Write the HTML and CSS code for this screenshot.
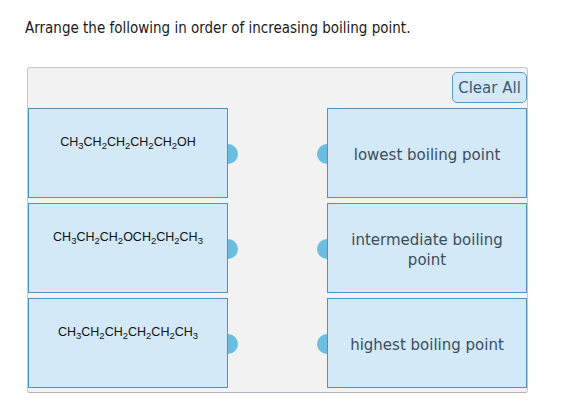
FILE: index.html
```html
<!DOCTYPE html>
<html lang="en">
<head>
    <meta charset="UTF-8">
    <title>Boiling point ranking</title>
    <link rel="stylesheet" href="styles.css">
</head>
<body>
    <p class="prompt">Arrange the following in order of increasing boiling point.</p>

    <div class="match-board">
        <div class="toolbar">
            <button class="clear-btn" type="button">Clear All</button>
        </div>

        <div class="match-grid">
            <div class="card source">
                <span class="formula">CH<sub>3</sub>CH<sub>2</sub>CH<sub>2</sub>CH<sub>2</sub>CH<sub>2</sub>OH</span>
            </div>
            <div class="card target">lowest boiling point</div>

            <div class="card source">
                <span class="formula">CH<sub>3</sub>CH<sub>2</sub>CH<sub>2</sub>OCH<sub>2</sub>CH<sub>2</sub>CH<sub>3</sub></span>
            </div>
            <div class="card target">intermediate boiling point</div>

            <div class="card source">
                <span class="formula">CH<sub>3</sub>CH<sub>2</sub>CH<sub>2</sub>CH<sub>2</sub>CH<sub>2</sub>CH<sub>3</sub></span>
            </div>
            <div class="card target">highest boiling point</div>
        </div>
    </div>
</body>
</html>
```

FILE: styles.css
```css
body {
    margin: 0;
    padding: 0 0 0 25px;
    background: #ffffff;
    font-family: "DejaVu Sans", Verdana, sans-serif;
}

.prompt {
    margin: 0;
    padding-top: 19px;
    font-family: "DejaVu Sans Condensed", "DejaVu Sans", Verdana, sans-serif;
    font-size: 15px;
    line-height: 18px;
    color: #1a1a1a;
}

/* grey panel holding both columns */
.match-board {
    width: 499px;
    margin: 30px 0 0 2px;
    padding: 0 0 4px;
    background: #f2f2f2;
    border: 1px solid #c3cbd6;
    border-bottom-color: #aab3bf;
    border-radius: 3px;
}

.toolbar {
    display: flex;
    justify-content: flex-end;
    padding: 4px 0 5px;
}

.clear-btn {
    width: 75px;
    height: 31px;
    padding: 0;
    font-family: "DejaVu Sans", Verdana, sans-serif;
    font-size: 15px;
    color: #3d5a72;
    background: #d3e9f7;
    border: 1px solid #5a9dc2;
    border-radius: 5px;
}

.match-grid {
    display: grid;
    grid-template-columns: 200px 200px;
    justify-content: space-between;
    row-gap: 5px;
}

.card {
    position: relative;
    box-sizing: border-box;
    height: 90px;
    background: #d3e9f7;
    border: 1px solid #4a94bf;
}

/* half-round connector dot peeking out from the card edge */
.card::after {
    content: '';
    position: absolute;
    top: 35px;
    width: 10px;
    height: 20px;
    background: #6bbee0;
}

.source::after {
    left: 100%;
    margin-left: 1px;
    border-radius: 0 10px 10px 0;
}

.target::after {
    right: 100%;
    margin-right: 1px;
    border-radius: 10px 0 0 10px;
}

.source {
    display: flex;
    justify-content: center;
    padding-top: 25px;
}

.formula {
    font-family: "Liberation Sans", Arial, sans-serif;
    font-size: 12.5px;
    line-height: 16px;
    color: #111111;
}

.formula sub {
    font-size: 9.5px;
    line-height: 0;
    vertical-align: -3px;
}

.target {
    display: flex;
    align-items: center;
    justify-content: center;
    padding: 4px 20px 0;
    text-align: center;
    font-size: 15px;
    line-height: 20px;
    color: #3b4d60;
}
```
